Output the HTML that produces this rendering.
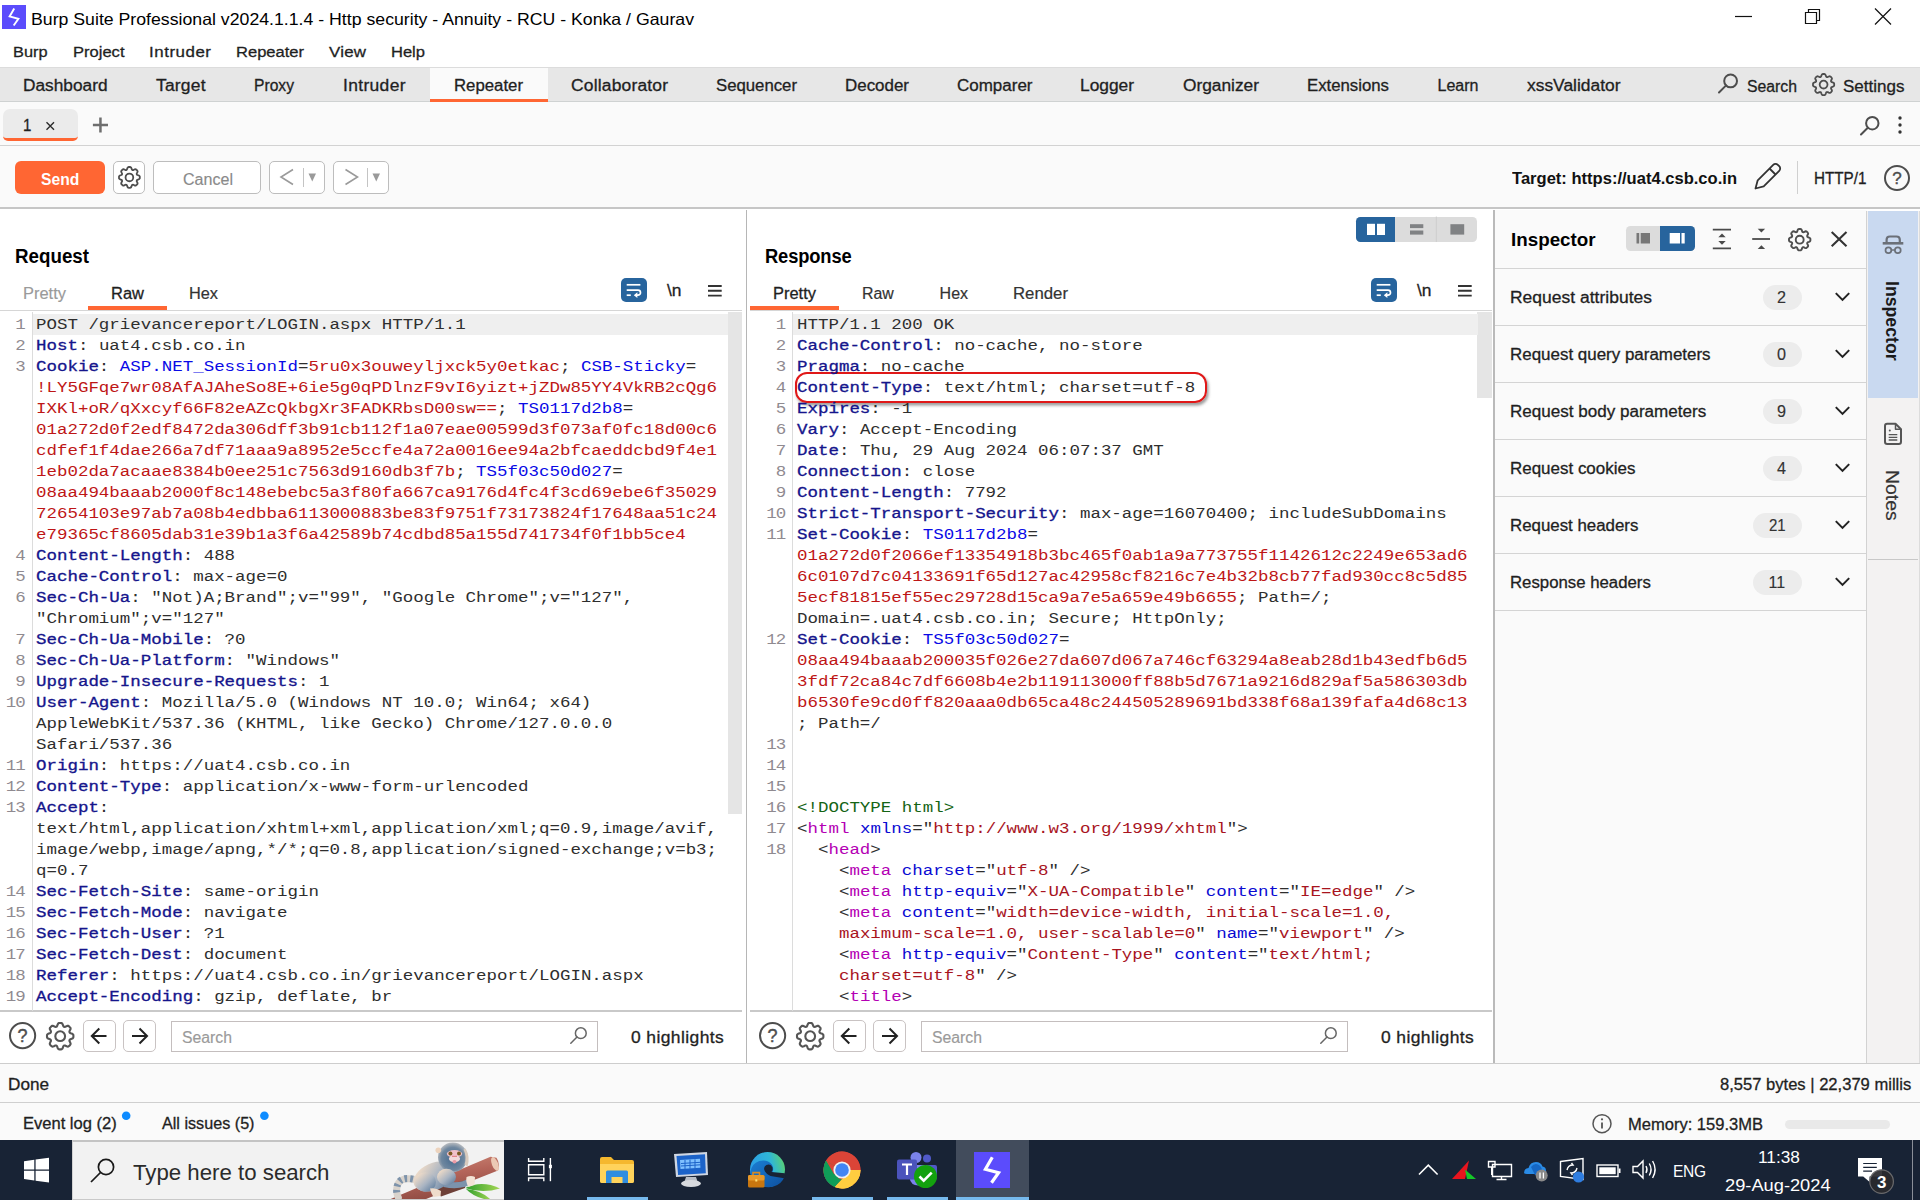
<!DOCTYPE html>
<html lang="en">
<head>
<meta charset="utf-8">
<title>Burp Suite Professional - Repeater</title>
<style>
html,body{margin:0;padding:0;}
body{width:1920px;height:1200px;position:relative;overflow:hidden;background:#fff;font-family:"Liberation Sans",sans-serif;}
.a{position:absolute;box-sizing:border-box;}
.t{position:absolute;white-space:pre;line-height:24px;transform-origin:0 0;font-family:"Liberation Sans",sans-serif;}
svg{position:absolute;overflow:visible;}
.btn{position:absolute;box-sizing:border-box;background:#fff;border:1px solid #bdbdbd;border-radius:5px;}
.code{position:absolute;font-family:"Liberation Mono",monospace;font-size:15.5px;transform:scaleX(1.1265);transform-origin:0 0;line-height:21px;color:#2e2e2e;}
.code div{height:21px;white-space:pre;}
.ln{position:absolute;font-family:"Liberation Mono",monospace;font-size:15.5px;transform:scaleX(1.1265);transform-origin:100% 0;line-height:21px;color:#8f8a90;text-align:right;letter-spacing:-1px;}
.ln div{height:21px;}
.h{color:#15158c;-webkit-text-stroke:0.32px #15158c;}
.cn{color:#0a0ae6;}
.cv{color:#be1616;}
.tg{color:#b400b4;}
.an{color:#0a0ad2;}
.av{color:#a8141e;}
.dt{color:#146414;}
.vt{position:absolute;white-space:pre;font-family:"Liberation Sans",sans-serif;transform-origin:0 0;transform:rotate(90deg);line-height:24px;}

</style>
</head>
<body>
<!-- title bar -->
<div class="a" style="left:2px;top:5px;width:24px;height:24px;background:#5b4cfc;"></div>
<svg style="left:2px;top:5px" width="24" height="24" viewBox="0 0 24 24"><path d="M12.200 3.500L7.600 11.500L16.400 13.900L11.700 20.500" fill="none" stroke="#fff" stroke-width="1.900" stroke-linejoin="miter"/></svg>
<svg style="left:0;top:0" width="1" height="1"><g fill="none" stroke="#111" stroke-width="1.2"><path d="M1735 16.5h17"/><path d="M1805.5 12.5h11v11h-11z"/><path d="M1808.5 12.5v-3h11v11h-3"/><path d="M1875 8.5l16 16M1891 8.5l-16 16"/></g></svg>
<!-- main tab bar -->
<div class="a" style="left:0px;top:67px;width:1920px;height:35px;background:#e7e7e7;border-top:1px solid #dcdcdc;border-bottom:1px solid #cfd2d2;"></div>
<div class="a" style="left:430px;top:68px;width:117.5px;height:34px;background:#fafafa;border-bottom:3px solid #ff6633;"></div>
<svg style="left:0;top:0" width="1" height="1"><g fill="none" stroke="#4d4d4d" stroke-width="2" stroke-linecap="round"><circle cx="1730.6" cy="80.9" r="6.4"/><path d="M1726.1 85.4L1719.0 92.5"/></g></svg>
<svg style="left:0;top:0" width="0" height="0"><defs><path id="gearp" vector-effect="non-scaling-stroke" d="M0.0 -10.0L0.6 -10.0L1.1 -9.9L1.6 -9.5L2.0 -8.7L2.3 -7.8L2.6 -7.3L2.9 -7.1L3.4 -7.0L3.9 -7.1L4.8 -7.6L5.6 -7.9L6.2 -7.8L6.7 -7.4L7.1 -7.1L7.4 -6.7L7.8 -6.2L7.9 -5.6L7.6 -4.8L7.1 -3.9L7.0 -3.4L7.1 -2.9L7.3 -2.6L7.8 -2.3L8.7 -2.0L9.5 -1.6L9.9 -1.1L10.0 -0.6L10.0 0.0L10.0 0.6L9.9 1.1L9.5 1.6L8.7 2.0L7.8 2.3L7.3 2.6L7.1 2.9L7.0 3.4L7.1 3.9L7.6 4.8L7.9 5.6L7.8 6.2L7.4 6.7L7.1 7.1L6.7 7.4L6.2 7.8L5.6 7.9L4.8 7.6L3.9 7.1L3.4 7.0L2.9 7.1L2.6 7.3L2.3 7.8L2.0 8.7L1.6 9.5L1.1 9.9L0.6 10.0L0.0 10.0L-0.6 10.0L-1.1 9.9L-1.6 9.5L-2.0 8.7L-2.3 7.8L-2.6 7.3L-2.9 7.1L-3.4 7.0L-3.9 7.1L-4.8 7.6L-5.6 7.9L-6.2 7.8L-6.7 7.4L-7.1 7.1L-7.4 6.7L-7.8 6.2L-7.9 5.6L-7.6 4.8L-7.1 3.9L-7.0 3.4L-7.1 2.9L-7.3 2.6L-7.8 2.3L-8.7 2.0L-9.5 1.6L-9.9 1.1L-10.0 0.6L-10.0 0.0L-10.0 -0.6L-9.9 -1.1L-9.5 -1.6L-8.7 -2.0L-7.8 -2.3L-7.3 -2.6L-7.1 -2.9L-7.0 -3.4L-7.1 -3.9L-7.6 -4.8L-7.9 -5.6L-7.8 -6.2L-7.4 -6.7L-7.1 -7.1L-6.7 -7.4L-6.2 -7.8L-5.6 -7.9L-4.8 -7.6L-3.9 -7.1L-3.4 -7.0L-2.9 -7.1L-2.6 -7.3L-2.3 -7.8L-2.0 -8.7L-1.6 -9.5L-1.1 -9.9L-0.6 -10.0Z"/></defs></svg>
<svg style="left:1810.9px;top:71.9px" width="25.2" height="25.2" viewBox="-12.6 -12.6 25.2 25.2"><g fill="none" stroke="#4d4d4d" stroke-width="1.8" stroke-linejoin="round"><use href="#gearp" transform="scale(1.060)"/><circle r="3.92"/></g></svg>
<!-- repeater sub tabs -->
<div class="a" style="left:0px;top:102px;width:1920px;height:44px;background:#fafafa;border-bottom:1px solid #d2d2d2;"></div>
<div class="a" style="left:3.3px;top:108.8px;width:74.6px;height:32.7px;background:#ebebeb;border-radius:7px 7px 5px 5px;border-bottom:3.2px solid #ff6633;"></div>
<svg style="left:0;top:0" width="1" height="1"><g fill="none" stroke="#2a2a2a" stroke-width="1.4"><path d="M46.500 122.200l7.500 7.500M54 122.200l-7.500 7.500"/></g><g stroke="#6e6e6e" stroke-width="2.500"><path d="M92.900 125h15.100M100.450 117.500v15"/></g><g fill="#333"><circle cx="1900" cy="118" r="1.7"/><circle cx="1900" cy="125" r="1.7"/><circle cx="1900" cy="132" r="1.7"/></g></svg>
<svg style="left:0;top:0" width="1" height="1"><g fill="none" stroke="#4d4d4d" stroke-width="2" stroke-linecap="round"><circle cx="1872.3" cy="123.2" r="6.2"/><path d="M1867.8 127.7L1861.0 134.5"/></g></svg>
<!-- toolbar -->
<div class="a" style="left:0px;top:146px;width:1920px;height:63px;background:#fafafa;border-bottom:2px solid #c6c6c6;"></div>
<div class="a" style="left:15px;top:161px;width:90px;height:33px;background:#ff6633;border-radius:6px;"></div>
<div class="btn" style="left:113px;top:161px;width:32px;height:33px;"></div>
<svg style="left:116.6px;top:165.1px" width="24.8" height="24.8" viewBox="-12.4 -12.4 24.8 24.8"><g fill="none" stroke="#4d4d4d" stroke-width="1.8" stroke-linejoin="round"><use href="#gearp" transform="scale(1.040)"/><circle r="3.85"/></g></svg>
<div class="btn" style="left:153px;top:161px;width:108px;height:33px;"></div>
<div class="btn" style="left:269px;top:161px;width:56px;height:33px;"></div>
<div class="btn" style="left:333px;top:161px;width:56px;height:33px;"></div>
<svg style="left:0;top:0" width="1" height="1"><g fill="none" stroke="#9a9a9a" stroke-width="1.6"><path d="M293 169.5l-12 7.5l12 7.5"/><path d="M345.5 169.5l12 7.5l-12 7.5"/></g><g stroke="#c4c4c4" stroke-width="1"><path d="M303.5 168v19M367.5 168v19"/></g><g fill="#9a9a9a"><path d="M308.5 173.5h7.5l-3.75 8z"/><path d="M372.5 173.5h7.5l-3.75 8z"/></g></svg>
<svg style="left:0;top:0" width="1" height="1"><g fill="none" stroke="#333" stroke-width="1.8" stroke-linejoin="round"><path d="M1755.5 188.5l2.2-8.2l15.5-15.5a3.2 3.2 0 0 1 4.6 0l1.4 1.4a3.2 3.2 0 0 1 0 4.6l-15.5 15.5z"/><path d="M1769.5 168.5l6 6"/></g><path d="M1797.5 161v33" stroke="#d0d0d0" stroke-width="1"/></svg>
<svg style="left:1881.5px;top:162.5px" width="30" height="30" viewBox="-15 -15 30 30"><circle r="12.0" fill="none" stroke="#4d4d4d" stroke-width="2"/><text x="0" y="6.1" text-anchor="middle" font-family="Liberation Sans, sans-serif" font-size="17" fill="#4d4d4d" stroke="#4d4d4d" stroke-width="0.4">?</text></svg>
<!-- request / response panels -->
<div class="a" style="left:745.5px;top:210px;width:1.5px;height:853px;background:#b6b6b6;"></div>
<div class="a" style="left:1492.5px;top:210px;width:2.2px;height:853px;background:#bababa;"></div>
<div class="a" style="left:0px;top:310px;width:742px;height:1px;background:#d6d6d6;"></div>
<div class="a" style="left:0px;top:1010px;width:742px;height:1.5px;background:#c9c9c9;"></div>
<div class="a" style="left:750px;top:310px;width:742px;height:1px;background:#d6d6d6;"></div>
<div class="a" style="left:750px;top:1010px;width:742px;height:1.5px;background:#c9c9c9;"></div>
<div class="a" style="left:727.5px;top:311.5px;width:14.8px;height:502.2px;background:#e5e5e5;"></div>
<div class="a" style="left:1477.4px;top:311.5px;width:14.8px;height:86.3px;background:#e5e5e5;"></div>
<div class="a" style="left:88px;top:306.2px;width:78.5px;height:3.5px;background:#ff6633;"></div>
<div class="a" style="left:750px;top:306.2px;width:88.5px;height:3.5px;background:#ff6633;"></div>
<div class="a" style="left:621px;top:278.2px;width:25.7px;height:23.8px;background:#27649d;border-radius:5px;"></div>
<svg style="left:621px;top:278.2px" width="26" height="24" viewBox="0 0 26 24"><g fill="none" stroke="#fff" stroke-width="1.7" stroke-linecap="butt"><path d="M5.700 6.800h13.700"/><path d="M5.700 12.200h11.300a2.500 2.500 0 0 1 0 5h-2.600"/><path d="M5.700 17.200h4.100"/></g><path d="M16.400 14.300v5.800l-3.600-2.900z" fill="#fff"/></svg>
<svg style="left:0;top:0" width="1" height="1"><g stroke="#333" stroke-width="1.9"><path d="M708 286h13.700M708 290.800h13.700M708 295.600h13.700"/></g></svg>
<div class="a" style="left:1371px;top:278.2px;width:25.7px;height:23.8px;background:#27649d;border-radius:5px;"></div>
<svg style="left:1371px;top:278.2px" width="26" height="24" viewBox="0 0 26 24"><g fill="none" stroke="#fff" stroke-width="1.7" stroke-linecap="butt"><path d="M5.700 6.800h13.700"/><path d="M5.700 12.200h11.300a2.500 2.500 0 0 1 0 5h-2.600"/><path d="M5.700 17.200h4.100"/></g><path d="M16.400 14.300v5.800l-3.600-2.900z" fill="#fff"/></svg>
<svg style="left:0;top:0" width="1" height="1"><g stroke="#333" stroke-width="1.9"><path d="M1458 286h13.700M1458 290.800h13.700M1458 295.600h13.700"/></g></svg>
<div class="a" style="left:1355.8px;top:216.5px;width:121.7px;height:25.5px;background:#dcdcdc;border-radius:4.5px;"></div>
<div class="a" style="left:1355.8px;top:216.5px;width:39.2px;height:25.5px;background:#27649d;border-radius:4.5px 0 0 4.5px;"></div>
<svg style="left:0;top:0" width="1" height="1"><g fill="#fff"><rect x="1367" y="223.800" width="8" height="11.200"/><rect x="1377" y="223.800" width="8" height="11.200"/></g><g fill="#808284"><rect x="1410" y="224.200" width="13.300" height="3.900"/><rect x="1410" y="230.500" width="13.300" height="4.100"/><rect x="1450.400" y="224.200" width="13.800" height="10.400"/></g><path d="M1436.300 216.500v25.500" stroke="#cdcdcd" stroke-width="1"/></svg>
<div class="a" style="left:794.5px;top:372px;width:412.5px;height:30.5px;border:2px solid #e01818;border-radius:12px;box-shadow:1.5px 2.5px 3px rgba(90,90,90,.6);"></div>
<svg style="left:6.799999999999999px;top:1019.9999999999999px" width="31.2" height="31.2" viewBox="-15.6 -15.6 31.2 31.2"><circle r="12.6" fill="none" stroke="#4d4d4d" stroke-width="2"/><text x="0" y="6.5" text-anchor="middle" font-family="Liberation Sans, sans-serif" font-size="18" fill="#4d4d4d" stroke="#4d4d4d" stroke-width="0.4">?</text></svg>
<svg style="left:44.5px;top:1020.5px" width="30.4" height="30.4" viewBox="-15.2 -15.2 30.4 30.4"><g fill="none" stroke="#555" stroke-width="2.1" stroke-linejoin="round"><use href="#gearp" transform="scale(1.320)"/><circle r="4.88"/></g></svg>
<div class="btn" style="left:82.5px;top:1019.5px;width:33px;height:32.5px;border-color:#c9c3c3;"></div>
<div class="btn" style="left:123px;top:1019.5px;width:33px;height:32.5px;border-color:#c9c3c3;"></div>
<svg style="left:0;top:0" width="1" height="1"><g fill="none" stroke="#222" stroke-width="2"><path d="M106.5 1036h-14.5M99.3 1028.5l-7.5 7.5l7.5 7.5"/><path d="M132 1036h14.5M139.5 1028.5l7.5 7.5l-7.5 7.5"/></g></svg>
<div class="a" style="left:171px;top:1021px;width:427px;height:31px;background:#fff;border:1.5px solid #c4bebe;"></div>
<svg style="left:0;top:0" width="1" height="1"><g fill="none" stroke="#666" stroke-width="1.5" stroke-linecap="round"><circle cx="580.8" cy="1033.2" r="5.4"/><path d="M577.0 1037.0L570.8 1043.2"/></g></svg>
<svg style="left:756.8px;top:1019.9999999999999px" width="31.2" height="31.2" viewBox="-15.6 -15.6 31.2 31.2"><circle r="12.6" fill="none" stroke="#4d4d4d" stroke-width="2"/><text x="0" y="6.5" text-anchor="middle" font-family="Liberation Sans, sans-serif" font-size="18" fill="#4d4d4d" stroke="#4d4d4d" stroke-width="0.4">?</text></svg>
<svg style="left:794.5px;top:1020.5px" width="30.4" height="30.4" viewBox="-15.2 -15.2 30.4 30.4"><g fill="none" stroke="#555" stroke-width="2.1" stroke-linejoin="round"><use href="#gearp" transform="scale(1.320)"/><circle r="4.88"/></g></svg>
<div class="btn" style="left:832.5px;top:1019.5px;width:33px;height:32.5px;border-color:#c9c3c3;"></div>
<div class="btn" style="left:873px;top:1019.5px;width:33px;height:32.5px;border-color:#c9c3c3;"></div>
<svg style="left:0;top:0" width="1" height="1"><g fill="none" stroke="#222" stroke-width="2"><path d="M856.5 1036h-14.5M849.3 1028.5l-7.5 7.5l7.5 7.5"/><path d="M882 1036h14.5M889.5 1028.5l7.5 7.5l-7.5 7.5"/></g></svg>
<div class="a" style="left:921px;top:1021px;width:427px;height:31px;background:#fff;border:1.5px solid #c4bebe;"></div>
<svg style="left:0;top:0" width="1" height="1"><g fill="none" stroke="#666" stroke-width="1.5" stroke-linecap="round"><circle cx="1330.8" cy="1033.2" r="5.4"/><path d="M1327.0 1037.0L1320.8 1043.2"/></g></svg>
<!-- inspector -->
<div class="a" style="left:1494.7px;top:210px;width:372.3px;height:853px;background:#fafafa;"></div>
<div class="a" style="left:1494.7px;top:267.5px;width:372.3px;height:1.5px;background:#d4d4d4;"></div>
<div class="a" style="left:1494.7px;top:324.5px;width:372.3px;height:1.5px;background:#d4d4d4;"></div>
<div class="a" style="left:1494.7px;top:381.5px;width:372.3px;height:1.5px;background:#d4d4d4;"></div>
<div class="a" style="left:1494.7px;top:438.5px;width:372.3px;height:1.5px;background:#d4d4d4;"></div>
<div class="a" style="left:1494.7px;top:495.5px;width:372.3px;height:1.5px;background:#d4d4d4;"></div>
<div class="a" style="left:1494.7px;top:552.5px;width:372.3px;height:1.5px;background:#d4d4d4;"></div>
<div class="a" style="left:1494.7px;top:609.5px;width:372.3px;height:1.5px;background:#d4d4d4;"></div>
<div class="a" style="left:1626px;top:225.9px;width:69px;height:25.1px;background:#dcdcdc;border-radius:4.5px;"></div>
<div class="a" style="left:1660.3px;top:225.9px;width:34.7px;height:25.1px;background:#27649d;border-radius:0 4.5px 4.5px 0;"></div>
<svg style="left:0;top:0" width="1" height="1"><g fill="#777"><rect x="1636.5" y="233" width="2.7" height="10.5"/><rect x="1640.7" y="233" width="9.3" height="10.5"/></g><g fill="#fff"><rect x="1669.7" y="233" width="10.3" height="10.5"/><rect x="1681.5" y="233" width="3.2" height="10.5"/></g><g stroke="#4a4a4a" stroke-width="1.8" fill="none"><path d="M1712.8 229.700h18.200M1712.800 248.400h18.200"/><path d="M1752.200 239h17.800"/><path d="M1831.700 232l14.800 14.300M1846.500 232l-14.800 14.300" stroke-width="2.100" stroke="#333"/></g><g fill="#4a4a4a"><path d="M1718.300 237.200h7.400l-3.700-3.700z"/><path d="M1718.300 241h7.400l-3.700 3.700z"/><path d="M1757.700 228.800h7.400l-3.700 3.700z"/><path d="M1757.700 249h7.400l-3.700-3.700z"/></g></svg>
<svg style="left:1787.0px;top:226.5px" width="25.4" height="25.4" viewBox="-12.7 -12.7 25.4 25.4"><g fill="none" stroke="#4d4d4d" stroke-width="1.9" stroke-linejoin="round"><use href="#gearp" transform="scale(1.070)"/><circle r="3.96"/></g></svg>
<svg style="left:0;top:0" width="1" height="1"><path d="M1835.8 293.1l6.7 6.8l6.7-6.8" fill="none" stroke="#222" stroke-width="2"/></svg>
<svg style="left:0;top:0" width="1" height="1"><path d="M1835.8 350.1l6.7 6.8l6.7-6.8" fill="none" stroke="#222" stroke-width="2"/></svg>
<svg style="left:0;top:0" width="1" height="1"><path d="M1835.8 407.1l6.7 6.8l6.7-6.8" fill="none" stroke="#222" stroke-width="2"/></svg>
<svg style="left:0;top:0" width="1" height="1"><path d="M1835.8 464.1l6.7 6.8l6.7-6.8" fill="none" stroke="#222" stroke-width="2"/></svg>
<svg style="left:0;top:0" width="1" height="1"><path d="M1835.8 521.1l6.7 6.8l6.7-6.8" fill="none" stroke="#222" stroke-width="2"/></svg>
<svg style="left:0;top:0" width="1" height="1"><path d="M1835.8 578.1l6.7 6.8l6.7-6.8" fill="none" stroke="#222" stroke-width="2"/></svg>
<div class="a" style="left:1762.5px;top:285px;width:39.0px;height:25px;background:#ececec;border-radius:12.5px;"></div>
<div class="a" style="left:1762.5px;top:342px;width:39.0px;height:25px;background:#ececec;border-radius:12.5px;"></div>
<div class="a" style="left:1762.5px;top:399px;width:39.0px;height:25px;background:#ececec;border-radius:12.5px;"></div>
<div class="a" style="left:1762.5px;top:456px;width:39.0px;height:25px;background:#ececec;border-radius:12.5px;"></div>
<div class="a" style="left:1753px;top:513px;width:48.5px;height:25px;background:#ececec;border-radius:12.5px;"></div>
<div class="a" style="left:1753px;top:570px;width:48.5px;height:25px;background:#ececec;border-radius:12.5px;"></div>
<div class="a" style="left:1866px;top:210.6px;width:54px;height:852.4px;background:#f3f2f2;border-left:1.7px solid #d2d2d2;border-right:1.5px solid #dcdcdc;"></div>
<div class="a" style="left:1867.7px;top:210.6px;width:50.8px;height:187.4px;background:#c9d9f0;"></div>
<div class="a" style="left:1867.7px;top:558.6px;width:50.8px;height:1.5px;background:#c8c8c8;"></div>
<svg style="left:0;top:0" width="1" height="1"><g fill="none" stroke="#6b7078"><path d="M1882.700 243.300h20.600" stroke-width="2.600"/><path d="M1886.600 243v-3.200q0-3.300 3.300-3.300h6.600q3.300 0 3.300 3.300v3.200" stroke-width="2.200"/><circle cx="1888.400" cy="250.300" r="2.900" stroke-width="1.700"/><circle cx="1897.800" cy="250.300" r="2.900" stroke-width="1.700"/><path d="M1891.300 250h3.600" stroke-width="1.500"/></g><g fill="none" stroke="#555" stroke-width="2" stroke-linejoin="round"><path d="M1885 426q0-2.200 2.200-2.200h8.300l5.500 5.500v12.500q0 2.200-2.200 2.200h-11.600q-2.200 0-2.200-2.200z"/><path d="M1895.500 424v5.300h5.300" stroke-width="1.500"/><path d="M1888.700 434.700h8.600M1888.700 437.400h8.600M1888.700 440h8.600" stroke-width="1.300"/></g><circle cx="1889.800" cy="430.600" r="1" fill="#555"/></svg>
<span class="vt" style="left:1903.800px;top:280.700px;font-size:18.800px;font-weight:700;color:#1a1a1a;transform:rotate(90deg) scaleX(0.942);">Inspector</span>
<span class="vt" style="left:1903.800px;top:469.800px;font-size:19px;color:#333;transform:rotate(90deg) scaleX(1.020);-webkit-text-stroke:0.2px #333;">Notes</span>
<!-- status -->
<div class="a" style="left:0px;top:1063px;width:1920px;height:40px;background:#fafafa;border-top:1.5px solid #cdcdcd;border-bottom:1.5px solid #cfcfcf;"></div>
<div class="a" style="left:0px;top:1103px;width:1920px;height:37px;background:#fafafa;"></div>
<svg style="left:0;top:0" width="1" height="1"><circle cx="126.2" cy="1115.8" r="4.3" fill="#0d8bff"/><circle cx="264.4" cy="1115.8" r="4.3" fill="#0d8bff"/><circle cx="1602" cy="1123.7" r="9" fill="none" stroke="#555" stroke-width="1.5"/><path d="M1602 1122.500v6" stroke="#555" stroke-width="1.8"/><circle cx="1602" cy="1119.3" r="1.1" fill="#555"/></svg>
<div class="a" style="left:1785px;top:1119.5px;width:105px;height:9.5px;background:#e9e9e9;border-radius:5px;"></div><div class="a vp" style="left:0;top:312px;width:727.5px;height:698.5px;overflow:hidden;">
<div class="a" style="left:33px;top:1.7px;width:694.5px;height:21px;background:#efefef;"></div>
<div class="a" style="left:32px;top:0;width:1px;height:699px;background:#dcdcdc;"></div>
<div class="ln" style="left:0;width:24.5px;top:2.5px;">
<div>1</div>
<div>2</div>
<div>3</div>
<div>&nbsp;</div>
<div>&nbsp;</div>
<div>&nbsp;</div>
<div>&nbsp;</div>
<div>&nbsp;</div>
<div>&nbsp;</div>
<div>&nbsp;</div>
<div>&nbsp;</div>
<div>4</div>
<div>5</div>
<div>6</div>
<div>&nbsp;</div>
<div>7</div>
<div>8</div>
<div>9</div>
<div>10</div>
<div>&nbsp;</div>
<div>&nbsp;</div>
<div>11</div>
<div>12</div>
<div>13</div>
<div>&nbsp;</div>
<div>&nbsp;</div>
<div>&nbsp;</div>
<div>14</div>
<div>15</div>
<div>16</div>
<div>17</div>
<div>18</div>
<div>19</div>
</div>
<div class="code" style="left:36.4px;top:2.5px;">
<div>POST /grievancereport/LOGIN.aspx HTTP/1.1</div>
<div><span class="h">Host</span>: uat4.csb.co.in</div>
<div><span class="h">Cookie</span>: <span class="cn">ASP.NET_SessionId</span>=<span class="cv">5ru0x3ouweyljxck5y0etkac</span>; <span class="cn">CSB-Sticky</span>=</div>
<div><span class="cv">!LY5GFqe7wr08AfAJAheSo8E+6ie5g0qPDlnzF9vI6yizt+jZDw85YY4VkRB2cQg6</span></div>
<div><span class="cv">IXKl+oR/qXxcyf66F82eAZcQkbgXr3FADKRbsD00sw==</span>; <span class="cn">TS0117d2b8</span>=</div>
<div><span class="cv">01a272d0f2edf8472da306dff3b91cb112f1a07eae00599d3f073af0fc18d00c6</span></div>
<div><span class="cv">cdfef1f4dae266a7df71aaa9a8952e5ccfe4a72a0016ee94a2bfcaeddcbd9f4e1</span></div>
<div><span class="cv">1eb02da7acaae8384b0ee251c7563d9160db3f7b</span>; <span class="cn">TS5f03c50d027</span>=</div>
<div><span class="cv">08aa494baaab2000f8c148ebebc5a3f80fa667ca9176d4fc4f3cd69ebe6f35029</span></div>
<div><span class="cv">72654103e97ab7a08b4edbba6113000883be83f9751f73173824f17648aa51c24</span></div>
<div><span class="cv">e79365cf8605dab31e39b1a3f6a42589b74cdbd85a155d741734f0f1bb5ce4</span></div>
<div><span class="h">Content-Length</span>: 488</div>
<div><span class="h">Cache-Control</span>: max-age=0</div>
<div><span class="h">Sec-Ch-Ua</span>: "Not)A;Brand";v="99", "Google Chrome";v="127",</div>
<div>"Chromium";v="127"</div>
<div><span class="h">Sec-Ch-Ua-Mobile</span>: ?0</div>
<div><span class="h">Sec-Ch-Ua-Platform</span>: "Windows"</div>
<div><span class="h">Upgrade-Insecure-Requests</span>: 1</div>
<div><span class="h">User-Agent</span>: Mozilla/5.0 (Windows NT 10.0; Win64; x64)</div>
<div>AppleWebKit/537.36 (KHTML, like Gecko) Chrome/127.0.0.0</div>
<div>Safari/537.36</div>
<div><span class="h">Origin</span>: https://uat4.csb.co.in</div>
<div><span class="h">Content-Type</span>: application/x-www-form-urlencoded</div>
<div><span class="h">Accept</span>:</div>
<div>text/html,application/xhtml+xml,application/xml;q=0.9,image/avif,</div>
<div>image/webp,image/apng,*/*;q=0.8,application/signed-exchange;v=b3;</div>
<div>q=0.7</div>
<div><span class="h">Sec-Fetch-Site</span>: same-origin</div>
<div><span class="h">Sec-Fetch-Mode</span>: navigate</div>
<div><span class="h">Sec-Fetch-User</span>: ?1</div>
<div><span class="h">Sec-Fetch-Dest</span>: document</div>
<div><span class="h">Referer</span>: https://uat4.csb.co.in/grievancereport/LOGIN.aspx</div>
<div><span class="h">Accept-Encoding</span>: gzip, deflate, br</div>
</div>

</div>
<div class="a vp" style="left:750px;top:312px;width:727.5px;height:698.5px;overflow:hidden;">
<div class="a" style="left:43px;top:1.7px;width:684.5px;height:21px;background:#efefef;"></div>
<div class="a" style="left:42px;top:0;width:1px;height:699px;background:#dcdcdc;"></div>
<div class="ln" style="left:0;width:35px;top:2.5px;">
<div>1</div>
<div>2</div>
<div>3</div>
<div>4</div>
<div>5</div>
<div>6</div>
<div>7</div>
<div>8</div>
<div>9</div>
<div>10</div>
<div>11</div>
<div>&nbsp;</div>
<div>&nbsp;</div>
<div>&nbsp;</div>
<div>&nbsp;</div>
<div>12</div>
<div>&nbsp;</div>
<div>&nbsp;</div>
<div>&nbsp;</div>
<div>&nbsp;</div>
<div>13</div>
<div>14</div>
<div>15</div>
<div>16</div>
<div>17</div>
<div>18</div>
<div>&nbsp;</div>
<div>&nbsp;</div>
<div>&nbsp;</div>
<div>&nbsp;</div>
<div>&nbsp;</div>
<div>&nbsp;</div>
<div>&nbsp;</div>
</div>
<div class="code" style="left:46.6px;top:2.5px;">
<div>HTTP/1.1 200 OK</div>
<div><span class="h">Cache-Control</span>: no-cache, no-store</div>
<div><span class="h">Pragma</span>: no-cache</div>
<div><span class="h">Content-Type</span>: text/html; charset=utf-8</div>
<div><span class="h">Expires</span>: -1</div>
<div><span class="h">Vary</span>: Accept-Encoding</div>
<div><span class="h">Date</span>: Thu, 29 Aug 2024 06:07:37 GMT</div>
<div><span class="h">Connection</span>: close</div>
<div><span class="h">Content-Length</span>: 7792</div>
<div><span class="h">Strict-Transport-Security</span>: max-age=16070400; includeSubDomains</div>
<div><span class="h">Set-Cookie</span>: <span class="cn">TS0117d2b8</span>=</div>
<div><span class="cv">01a272d0f2066ef13354918b3bc465f0ab1a9a773755f1142612c2249e653ad6</span></div>
<div><span class="cv">6c0107d7c04133691f65d127ac42958cf8216c7e4b32b8cb77fad930cc8c5d85</span></div>
<div><span class="cv">5ecf81815ef55ec29728d15ca9a7e5a659e49b6655</span>; Path=/;</div>
<div>Domain=.uat4.csb.co.in; Secure; HttpOnly;</div>
<div><span class="h">Set-Cookie</span>: <span class="cn">TS5f03c50d027</span>=</div>
<div><span class="cv">08aa494baaab200035f026e27da607d067a746cf63294a8eab28d1b43edfb6d5</span></div>
<div><span class="cv">3fdf72ca84c7df6608b4e2b119113000ff88b5d7671a9216d829af5a586303db</span></div>
<div><span class="cv">b6530fe9cd0ff820aaa0db65ca48c244505289691bd338f68a139fafa4d68c13</span></div>
<div>; Path=/</div>
<div>&nbsp;</div>
<div>&nbsp;</div>
<div>&nbsp;</div>
<div><span class="dt">&lt;!DOCTYPE html&gt;</span></div>
<div>&lt;<span class="tg">html</span> <span class="an">xmlns</span>="<span class="av">http://www.w3.org/1999/xhtml</span>"&gt;</div>
<div>  &lt;<span class="tg">head</span>&gt;</div>
<div>    &lt;<span class="tg">meta</span> <span class="an">charset</span>="<span class="av">utf-8</span>" /&gt;</div>
<div>    &lt;<span class="tg">meta</span> <span class="an">http-equiv</span>="<span class="av">X-UA-Compatible</span>" <span class="an">content</span>="<span class="av">IE=edge</span>" /&gt;</div>
<div>    &lt;<span class="tg">meta</span> <span class="an">content</span>="<span class="av">width=device-width, initial-scale=1.0,</span></div>
<div>    <span class="av">maximum-scale=1.0, user-scalable=0</span>" <span class="an">name</span>="<span class="av">viewport</span>" /&gt;</div>
<div>    &lt;<span class="tg">meta</span> <span class="an">http-equiv</span>="<span class="av">Content-Type</span>" <span class="an">content</span>="<span class="av">text/html;</span></div>
<div>    <span class="av">charset=utf-8</span>" /&gt;</div>
<div>    &lt;<span class="tg">title</span>&gt;</div>
</div>

</div>
<!-- windows taskbar -->
<div class="a" style="left:0;top:1140px;width:1920px;height:60px;background:#182335;"></div>
<svg style="left:0;top:0" width="1" height="1"><g fill="#fff"><path d="M24 1161.2l10.300-1.400v9.700h-10.300z"/><path d="M35.600 1159.600l13.400-1.900v11.800h-13.400z"/><path d="M24 1170.800h10.300v9.700l-10.300-1.400z"/><path d="M35.600 1170.800h13.400v11.800l-13.400-1.900z"/></g></svg>
<div class="a" style="left:72px;top:1140px;width:432px;height:60px;background:#f2f2f2;border-top:2px solid #c4c4c4;border-bottom:1.5px solid #c9c9c9;border-left:1.5px solid #d2d2d2;"></div>
<svg style="left:0;top:0" width="1" height="1"><g fill="none" stroke="#1a1a1a" stroke-width="1.7"><circle cx="106" cy="1167" r="7.6"/><path d="M100.5 1172.500l-9.500 9.500"/></g></svg>
<svg style="left:380px;top:1141.5px;overflow:hidden" width="123" height="57.500" viewBox="380 1141.500 123 57.500"><defs><linearGradient id="mk1" x1="0" y1="0" x2="1" y2="1"><stop offset="0.1" stop-color="#f5dfc9"/><stop offset="0.55" stop-color="#a9b4c2"/><stop offset="1" stop-color="#4f7196"/></linearGradient><radialGradient id="mk2" cx="0.5" cy="0.55" r="0.55"><stop offset="0" stop-color="#466a8e"/><stop offset="0.7" stop-color="#6f879f"/><stop offset="1" stop-color="#b9bcc0"/></radialGradient><linearGradient id="mk3" x1="0" y1="0" x2="0.35" y2="1"><stop offset="0" stop-color="#d08e7c"/><stop offset="0.5" stop-color="#b5655a"/><stop offset="1" stop-color="#8e4a42"/></linearGradient><linearGradient id="mk4" x1="0" y1="0" x2="1" y2="0"><stop offset="0" stop-color="#2f9e2c"/><stop offset="1" stop-color="#a4d654"/></linearGradient></defs><path d="M465.300 1187.400Q482 1179.500 500 1188Q482 1193.500 465.300 1187.400z" fill="url(#mk4)"/><path d="M466 1188.500Q481 1189.500 491.500 1199.800Q475 1198 466 1188.500z" fill="url(#mk4)"/><path d="M386 1200.500L421 1200.500L498 1170Q500.500 1163 496.500 1157.300L490.500 1156.200z" fill="url(#mk3)"/><ellipse cx="495" cy="1163.500" rx="3.100" ry="7.300" transform="rotate(-22 495 1163.500)" fill="#ecc9b4"/><path d="M431 1186.500L466 1180L465 1187.500L441 1196z" fill="#6e4038"/><path d="M415 1179Q398.500 1175.500 396.800 1187.500Q396.300 1193.500 398.300 1197" fill="none" stroke="#d9d3cc" stroke-width="7" stroke-linecap="round"/><path d="M413 1178.600Q398.500 1175.500 396.800 1187.500Q396.300 1192 397.300 1194" fill="none" stroke="#7d93ab" stroke-width="7" stroke-dasharray="2.600 3.200"/><ellipse cx="434" cy="1176" rx="21.500" ry="13.500" transform="rotate(-24 434 1176)" fill="url(#mk1)"/><ellipse cx="425.500" cy="1181.500" rx="10.500" ry="9.800" fill="url(#mk1)"/><path d="M430 1188Q436 1187 441 1190.500L440.500 1195.500L433.500 1196.500Q431 1193 430 1188z" fill="#efdccb"/><circle cx="452.800" cy="1156.800" r="14.800" fill="url(#mk2)"/><circle cx="438.300" cy="1149.800" r="2.800" fill="#ecd3bd"/><path d="M465.500 1148Q470.500 1156 467.500 1166L464.500 1164Q467 1156 463.500 1149z" fill="#d8cabd"/><path d="M444 1180Q458 1184.500 470 1177.500L474.500 1181.500Q462 1190.500 443.500 1186.500z" fill="#7c93ac"/><ellipse cx="446.500" cy="1176.500" rx="9.500" ry="8.300" fill="url(#mk1)"/><path d="M466.500 1176.500Q471 1174.500 475 1176.500L474.500 1184.500L468.500 1186.500Q465.500 1182 466.500 1176.500z" fill="#f3e3d6"/><ellipse cx="454.500" cy="1153.300" rx="7.700" ry="3.700" fill="#f1c0c9"/><circle cx="450.400" cy="1153" r="2" fill="#7a5a22"/><circle cx="459" cy="1153" r="2" fill="#7a5a22"/><ellipse cx="454.500" cy="1158.300" rx="5.600" ry="3.400" fill="#f3d9da"/><ellipse cx="454.500" cy="1161.200" rx="2.100" ry="1.700" fill="#ec9aa5"/><path d="M452 1155.800h5" stroke="#e0707a" stroke-width="1"/></svg>
<svg style="left:0;top:0" width="1" height="1"><g fill="none" stroke="#fff" stroke-width="1.400"><path d="M528.600 1158v3.200h15.200v-3.200"/><path d="M528.600 1164.700h15.200v10h-15.200z"/><path d="M528.600 1181.200v-3.200h15.200v3.200"/><path d="M550.400 1158v23.200"/></g><rect x="548.900" y="1164.800" width="3" height="3.400" fill="#fff"/></svg>
<svg style="left:600px;top:1156px" width="34" height="28" viewBox="0 0 34 28"><path d="M0 3q0-2 2-2h9l3 3h18q2 0 2 2v19q0 2-2 2h-30q-2 0-2-2z" fill="#f5b82e"/><path d="M0 8h34v17q0 2-2 2h-30q-2 0-2-2z" fill="#ffd35b"/><path d="M6 16q0-1.500 1.500-1.500h19q1.500 0 1.500 1.500v11h-22z" fill="#2f8de0"/><rect x="11.500" y="21" width="11" height="6" fill="#ffd35b"/></svg>
<svg style="left:672px;top:1150px" width="40" height="38" viewBox="0 0 40 38"><path d="M14 27h10l2 6h-14z" fill="#b9bec6"/><ellipse cx="19" cy="33.500" rx="10" ry="3.500" fill="#d7dade"/><path d="M2 4l33-2l1 23l-32 2z" fill="#cfd6e2"/><path d="M4.500 6l28.500-1.700l.800 19l-27.700 1.600z" fill="#1c63c9"/><path d="M8 10l20-1.200l.400 9l-19.900 1.200z" fill="#7fc0ff"/><g stroke="#1c63c9" stroke-width="1"><path d="M9 13.500l19.500-1.200M9 16l19.500-1.200M13 10v9M18 9.700v9M23 9.400v9"/></g></svg>
<svg style="left:748px;top:1151px" width="40" height="38" viewBox="0 0 40 38"><defs><linearGradient id="eg1" x1="0" y1="0.3" x2="1" y2="0"><stop offset="0" stop-color="#2b9fe6"/><stop offset="0.55" stop-color="#2fb6d8"/><stop offset="1" stop-color="#63d75a"/></linearGradient><linearGradient id="eg2" x1="0" y1="0" x2="1" y2="1"><stop offset="0" stop-color="#1b7ed3"/><stop offset="1" stop-color="#0d4f9e"/></linearGradient></defs><circle cx="19.500" cy="18.500" r="17.500" fill="url(#eg1)"/><path d="M2.300 21.500q1-9 9-11.500q8-2 12.500 3.500q2.500 4 .500 8l12.500 3.500q-3 8.500-12 10.800q-9 1.700-16-3.800q-5.500-4-6.500-10.500z" fill="url(#eg2)"/><path d="M17 20.500q-2.500-4 1.500-6.500q4.500-1.500 6 2.500q.700 2.500-1 4.500l13.300 1.200q.800 2.300-.500 5l-13.800-2.200q-3.500-1-5.500-4.500z" fill="#182335"/><rect x="0" y="24" width="16.500" height="12.500" rx="1.500" fill="#c8760f"/><rect x="0" y="24" width="16.500" height="5.500" rx="1.500" fill="#e8992a"/><path d="M5 24v-2.400h6.500v2.400" fill="none" stroke="#d98a20" stroke-width="1.600"/><rect x="7.300" y="28.300" width="2" height="2.200" fill="#ffe27a"/></svg>
<svg style="left:823px;top:1151px" width="38" height="38" viewBox="-19 -19 38 38"><circle r="18.500" fill="#db4437"/><path d="M-16.020 9.250A18.500 18.500 0 0 1 -16.020 -9.250L0 0z" fill="#db4437"/><path d="M0 0L-16.020 -9.250A18.500 18.500 0 0 0 -7.200 17.040z" fill="#0f9d58"/><path d="M-16.020 -9.250L-8 4.600L0 0z" fill="#db4437"/><path d="M-7.200 17.040A18.500 18.500 0 0 0 18.500 0L8 0L0 9.200z" fill="#ffcd40"/><path d="M-16.020 -9.250A18.500 18.500 0 0 1 18.500 0H0z" fill="#db4437"/><path d="M-16.020 -9.250L-8 4.620A9.240 9.240 0 0 0 0 9.240L-7.200 17.040A18.500 18.500 0 0 1 -16.020 -9.250z" fill="#0f9d58"/><path d="M18.500 0A18.500 18.500 0 0 1 -7.200 17.040L0 9.240A9.240 9.240 0 0 0 8 4.620L9.240 0z" fill="#ffcd40"/><circle r="8.600" fill="#f1f1f1"/><circle r="6.800" fill="#4285f4"/></svg>
<svg style="left:897px;top:1151px" width="42" height="38" viewBox="0 0 42 38"><circle cx="30" cy="7.500" r="4" fill="#5059c9"/><circle cx="19" cy="6.500" r="5.500" fill="#7b83eb"/><path d="M12 14h26q2 0 2 2v9q0 6-6 6q-5 0-6-5z" fill="#5059c9"/><path d="M9 14h20q1.500 0 1.500 1.500v11q0 8-9 8q-8 0-9-8z" fill="#7b83eb"/><rect x="0" y="8.500" width="20" height="20" rx="2" fill="#4b53bc"/><path d="M5 13.500h10M10 13.500v10.500" stroke="#fff" stroke-width="2.200"/><circle cx="28.500" cy="25.500" r="11.500" fill="#13a10e"/><path d="M22.500 25.500l4.200 4.200l8-8" fill="none" stroke="#fff" stroke-width="2.600"/></svg>
<div class="a" style="left:956px;top:1140px;width:73px;height:60px;background:#424c5c;"></div>
<div class="a" style="left:974px;top:1152px;width:36px;height:35.500px;background:#5b4cfc;"></div>
<svg style="left:974px;top:1152px" width="36" height="36" viewBox="0 0 36 36"><path d="M18.300 5.200L11.400 17.200L24.600 20.800L17.500 30.800" fill="none" stroke="#fff" stroke-width="3.200" stroke-linejoin="miter"/></svg>
<div class="a" style="left:587px;top:1197px;width:60.5px;height:3px;background:#76b9ed;"></div>
<div class="a" style="left:812px;top:1197px;width:60.5px;height:3px;background:#76b9ed;"></div>
<div class="a" style="left:887px;top:1197px;width:60.5px;height:3px;background:#76b9ed;"></div>
<div class="a" style="left:956px;top:1197px;width:73px;height:3px;background:#76b9ed;"></div>
<svg style="left:0;top:0" width="1" height="1"><path d="M1419 1174.500l9.300-9.300l9.300 9.300" fill="none" stroke="#fff" stroke-width="1.600"/><path d="M1452 1179l17-18.500l-4 18.500z" fill="#e8141e"/><path d="M1465 1169.500l11 9.500h-9z" fill="#15c728"/><g fill="none" stroke="#fff" stroke-width="1.400"><path d="M1492.500 1164.500h19v12h-19z"/><path d="M1496.500 1179.500h10M1501.500 1176.500v3"/><path d="M1488.500 1161.500h6.500v5.500h-6.500zM1491.700 1167v8"/></g><path d="M1524 1173q0-4.500 4.500-5q1.500-6 7.500-6q5 0 6.500 4.500q3.500.500 3.500 4q0 3.500-4 3.500h-13q-5 0-5-1z" fill="#2a8be6"/><path d="M1531 1167q3-4 7-2.500q3.500 1.500 4 5.500q3 0 3.500 3q-1 2-3.500 2h-7z" fill="#1567c4"/><circle cx="1541.700" cy="1175.500" r="6" fill="#8a8a8a"/><path d="M1540 1172.500v6M1543.400 1172.500v6" stroke="#fff" stroke-width="1.300"/><g fill="none" stroke="#fff" stroke-width="1.400"><path d="M1560.500 1161.500l22.500-3v21l-22.500-3z"/><path d="M1567 1170q1-5 6-5l-1.500-2M1577 1168q-1 5-6 5l1.500 2"/></g><circle cx="1578.500" cy="1177" r="5.600" fill="#2f7de0"/><g><rect x="1597" y="1165" width="21" height="11.500" fill="none" stroke="#fff" stroke-width="1.400"/><rect x="1599.300" y="1167.300" width="16.400" height="6.900" fill="#fff"/><rect x="1618.700" y="1168.500" width="1.800" height="4.500" fill="#fff"/></g><g fill="none" stroke="#fff" stroke-width="1.400"><path d="M1633 1166.500h4.500l5.500-5.500v17l-5.500-5.500h-4.500z"/><path d="M1646 1166q2 3.500 0 7M1649.300 1163.500q3.500 6 0 12M1652.600 1161q5 8.500 0 17"/></g><path d="M1858 1158h24v18.600h-12.500l.200 5.400l-6.500-5.400h-5.200z" fill="#fff"/><g stroke="#182335" stroke-width="1.200"><path d="M1863.200 1163.500h13.600M1863.200 1167.400h13.600M1863.200 1171.200h8.800"/></g><circle cx="1881.600" cy="1181.600" r="11.800" fill="#2a2a2e" fill-opacity=".93" stroke="#6a6a6c" stroke-width="1.200"/><path d="M1912.500 1140v60" stroke="#8a8f99" stroke-width="1"/></svg><span class="t" style="left:31px;top:7.0px;font-size:16.5px;color:#000;transform:scaleX(1.0726);">Burp Suite Professional v2024.1.1.4 - Http security - Annuity - RCU - Konka / Gaurav</span>
<span class="t" style="left:12.5px;top:40.0px;font-size:15.5px;color:#1f1f1f;transform:scaleX(1.0534);-webkit-text-stroke:0.3px #1f1f1f;">Burp</span>
<span class="t" style="left:72.5px;top:40.0px;font-size:15.5px;color:#1f1f1f;transform:scaleX(1.0674);-webkit-text-stroke:0.3px #1f1f1f;">Project</span>
<span class="t" style="left:149px;top:40.0px;font-size:15.5px;color:#1f1f1f;letter-spacing:0.494px;transform:scaleX(1.0900);-webkit-text-stroke:0.3px #1f1f1f;">Intruder</span>
<span class="t" style="left:236px;top:40.0px;font-size:15.5px;color:#1f1f1f;transform:scaleX(1.0664);-webkit-text-stroke:0.3px #1f1f1f;">Repeater</span>
<span class="t" style="left:329px;top:40.0px;font-size:15.5px;color:#1f1f1f;letter-spacing:0.206px;transform:scaleX(1.0900);-webkit-text-stroke:0.3px #1f1f1f;">View</span>
<span class="t" style="left:391px;top:40.0px;font-size:15.5px;color:#1f1f1f;transform:scaleX(1.0661);-webkit-text-stroke:0.3px #1f1f1f;">Help</span>
<span class="t" style="left:23px;top:73.5px;font-size:16px;color:#1f1f1f;transform:scaleX(1.0794);-webkit-text-stroke:0.3px #1f1f1f;">Dashboard</span>
<span class="t" style="left:156px;top:73.5px;font-size:16px;color:#1f1f1f;letter-spacing:0.189px;transform:scaleX(1.0900);-webkit-text-stroke:0.3px #1f1f1f;">Target</span>
<span class="t" style="left:254px;top:73.5px;font-size:16px;color:#1f1f1f;transform:scaleX(0.9778);-webkit-text-stroke:0.3px #1f1f1f;">Proxy</span>
<span class="t" style="left:342.5px;top:73.5px;font-size:16px;color:#1f1f1f;letter-spacing:0.314px;transform:scaleX(1.0900);-webkit-text-stroke:0.3px #1f1f1f;">Intruder</span>
<span class="t" style="left:453.5px;top:73.5px;font-size:16px;color:#1f1f1f;transform:scaleX(1.0482);-webkit-text-stroke:0.3px #1f1f1f;">Repeater</span>
<span class="t" style="left:570.5px;top:73.5px;font-size:16px;color:#1f1f1f;letter-spacing:0.167px;transform:scaleX(1.0900);-webkit-text-stroke:0.3px #1f1f1f;">Collaborator</span>
<span class="t" style="left:716px;top:73.5px;font-size:16px;color:#1f1f1f;transform:scaleX(1.0466);-webkit-text-stroke:0.3px #1f1f1f;">Sequencer</span>
<span class="t" style="left:845px;top:73.5px;font-size:16px;color:#1f1f1f;transform:scaleX(1.0581);-webkit-text-stroke:0.3px #1f1f1f;">Decoder</span>
<span class="t" style="left:957px;top:73.5px;font-size:16px;color:#1f1f1f;transform:scaleX(1.0613);-webkit-text-stroke:0.3px #1f1f1f;">Comparer</span>
<span class="t" style="left:1080px;top:73.5px;font-size:16px;color:#1f1f1f;transform:scaleX(1.0837);-webkit-text-stroke:0.3px #1f1f1f;">Logger</span>
<span class="t" style="left:1182.5px;top:73.5px;font-size:16px;color:#1f1f1f;transform:scaleX(1.0819);-webkit-text-stroke:0.3px #1f1f1f;">Organizer</span>
<span class="t" style="left:1306.5px;top:73.5px;font-size:16px;color:#1f1f1f;transform:scaleX(1.0477);-webkit-text-stroke:0.3px #1f1f1f;">Extensions</span>
<span class="t" style="left:1437.5px;top:73.5px;font-size:16px;color:#1f1f1f;-webkit-text-stroke:0.3px #1f1f1f;">Learn</span>
<span class="t" style="left:1526.5px;top:73.5px;font-size:16px;color:#1f1f1f;transform:scaleX(1.0876);-webkit-text-stroke:0.3px #1f1f1f;">xssValidator</span>
<span class="t" style="left:1746.5px;top:74.5px;font-size:16px;color:#1f1f1f;transform:scaleX(0.9861);-webkit-text-stroke:0.3px #1f1f1f;">Search</span>
<span class="t" style="left:1842.5px;top:74.5px;font-size:16px;color:#1f1f1f;transform:scaleX(1.0638);-webkit-text-stroke:0.3px #1f1f1f;">Settings</span>
<span class="t" style="left:23px;top:113.5px;font-size:16px;color:#1f1f1f;letter-spacing:-1.459px;transform:scaleX(0.9400);-webkit-text-stroke:0.3px #1f1f1f;">1</span>
<span class="t" style="left:40.5px;top:168.0px;font-size:16px;color:#fff;font-weight:700;transform:scaleX(0.9776);">Send</span>
<span class="t" style="left:182.5px;top:168.0px;font-size:16px;color:#8a8a8a;transform:scaleX(1.0038);-webkit-text-stroke:0.15px #8a8a8a;">Cancel</span>
<span class="t" style="left:1511.5px;top:166.0px;font-size:16.5px;color:#111;font-weight:700;transform:scaleX(1.0031);">Target: https://uat4.csb.co.in</span>
<span class="t" style="left:1813.5px;top:167.0px;font-size:16px;color:#1f1f1f;transform:scaleX(0.9524);-webkit-text-stroke:0.3px #1f1f1f;">HTTP/1</span>
<span class="t" style="left:15px;top:243.5px;font-size:19.5px;color:#000;font-weight:700;transform:scaleX(0.9618);">Request</span>
<span class="t" style="left:23px;top:282.0px;font-size:16px;color:#9a9a9a;transform:scaleX(1.0288);-webkit-text-stroke:0.15px #9a9a9a;">Pretty</span>
<span class="t" style="left:111px;top:282.0px;font-size:16px;color:#1f1f1f;transform:scaleX(1.0307);-webkit-text-stroke:0.3px #1f1f1f;">Raw</span>
<span class="t" style="left:189px;top:282.0px;font-size:16px;color:#333;transform:scaleX(1.0192);-webkit-text-stroke:0.2px #333;">Hex</span>
<span class="t" style="left:667px;top:279.0px;font-size:16px;color:#1f1f1f;transform:scaleX(1.0867);-webkit-text-stroke:0.3px #1f1f1f;">\n</span>
<span class="t" style="left:765.3px;top:243.5px;font-size:19.5px;color:#000;font-weight:700;letter-spacing:-0.138px;transform:scaleX(0.9400);">Response</span>
<span class="t" style="left:773px;top:282.0px;font-size:16px;color:#1f1f1f;transform:scaleX(1.0288);-webkit-text-stroke:0.3px #1f1f1f;">Pretty</span>
<span class="t" style="left:861.8px;top:282.0px;font-size:16px;color:#333;transform:scaleX(0.9933);-webkit-text-stroke:0.2px #333;">Raw</span>
<span class="t" style="left:939.6px;top:282.0px;font-size:16px;color:#333;-webkit-text-stroke:0.2px #333;">Hex</span>
<span class="t" style="left:1013.2px;top:282.0px;font-size:16px;color:#333;transform:scaleX(1.0479);-webkit-text-stroke:0.2px #333;">Render</span>
<span class="t" style="left:1417px;top:279.0px;font-size:16px;color:#1f1f1f;transform:scaleX(1.0867);-webkit-text-stroke:0.3px #1f1f1f;">\n</span>
<span class="t" style="left:182px;top:1026.0px;font-size:16px;color:#9a9a9a;transform:scaleX(0.9861);-webkit-text-stroke:0.15px #9a9a9a;">Search</span>
<span class="t" style="left:631px;top:1026.0px;font-size:16px;color:#1f1f1f;letter-spacing:0.376px;transform:scaleX(1.0900);-webkit-text-stroke:0.3px #1f1f1f;">0 highlights</span>
<span class="t" style="left:932px;top:1026.0px;font-size:16px;color:#9a9a9a;transform:scaleX(0.9861);-webkit-text-stroke:0.15px #9a9a9a;">Search</span>
<span class="t" style="left:1381px;top:1026.0px;font-size:16px;color:#1f1f1f;letter-spacing:0.376px;transform:scaleX(1.0900);-webkit-text-stroke:0.3px #1f1f1f;">0 highlights</span>
<span class="t" style="left:8px;top:1072.5px;font-size:16px;color:#1f1f1f;transform:scaleX(1.0719);-webkit-text-stroke:0.3px #1f1f1f;">Done</span>
<span class="t" style="left:1720.3px;top:1072.5px;font-size:16px;color:#1f1f1f;transform:scaleX(1.0352);-webkit-text-stroke:0.3px #1f1f1f;">8,557 bytes | 22,379 millis</span>
<span class="t" style="left:23px;top:1111.8px;font-size:16px;color:#1f1f1f;transform:scaleX(1.0334);-webkit-text-stroke:0.3px #1f1f1f;">Event log (2)</span>
<span class="t" style="left:162px;top:1111.8px;font-size:16px;color:#1f1f1f;transform:scaleX(1.0101);-webkit-text-stroke:0.3px #1f1f1f;">All issues (5)</span>
<span class="t" style="left:1628px;top:1113.0px;font-size:16px;color:#1f1f1f;transform:scaleX(1.0328);-webkit-text-stroke:0.3px #1f1f1f;">Memory: 159.3MB</span>
<span class="t" style="left:1511.4px;top:228.0px;font-size:19px;color:#000;font-weight:700;transform:scaleX(0.9891);">Inspector</span>
<span class="t" style="left:1510.4px;top:286.0px;font-size:16px;color:#1f1f1f;letter-spacing:0.024px;transform:scaleX(1.0900);-webkit-text-stroke:0.3px #1f1f1f;">Request attributes</span>
<span class="t" style="left:1777px;top:286.0px;font-size:16px;color:#333;transform:scaleX(1.0105);-webkit-text-stroke:0.15px #333;">2</span>
<span class="t" style="left:1510.4px;top:343.0px;font-size:16px;color:#1f1f1f;transform:scaleX(1.0589);-webkit-text-stroke:0.3px #1f1f1f;">Request query parameters</span>
<span class="t" style="left:1777px;top:343.0px;font-size:16px;color:#333;transform:scaleX(1.0105);-webkit-text-stroke:0.15px #333;">0</span>
<span class="t" style="left:1510.4px;top:400.0px;font-size:16px;color:#1f1f1f;transform:scaleX(1.0657);-webkit-text-stroke:0.3px #1f1f1f;">Request body parameters</span>
<span class="t" style="left:1777px;top:400.0px;font-size:16px;color:#333;transform:scaleX(1.0105);-webkit-text-stroke:0.15px #333;">9</span>
<span class="t" style="left:1510.4px;top:457.0px;font-size:16px;color:#1f1f1f;transform:scaleX(1.0600);-webkit-text-stroke:0.3px #1f1f1f;">Request cookies</span>
<span class="t" style="left:1777px;top:457.0px;font-size:16px;color:#333;transform:scaleX(1.0105);-webkit-text-stroke:0.15px #333;">4</span>
<span class="t" style="left:1510.4px;top:514.0px;font-size:16px;color:#1f1f1f;transform:scaleX(1.0537);-webkit-text-stroke:0.3px #1f1f1f;">Request headers</span>
<span class="t" style="left:1768.6px;top:514.0px;font-size:16px;color:#333;letter-spacing:-0.137px;transform:scaleX(0.9400);-webkit-text-stroke:0.15px #333;">21</span>
<span class="t" style="left:1510.4px;top:571.0px;font-size:16px;color:#1f1f1f;transform:scaleX(1.0483);-webkit-text-stroke:0.3px #1f1f1f;">Response headers</span>
<span class="t" style="left:1768.6px;top:571.0px;font-size:16px;color:#333;-webkit-text-stroke:0.15px #333;">11</span>
<span class="t" style="left:132.5px;top:1161.0px;font-size:22px;color:#2b2b2b;transform:scaleX(1.0105);">Type here to search</span>
<span class="t" style="left:1672.5px;top:1158.6px;font-size:16.5px;color:#fff;letter-spacing:-0.276px;transform:scaleX(0.9400);">ENG</span>
<span class="t" style="left:1757.8px;top:1145.6px;font-size:17px;color:#fff;transform:scaleX(1.0150);">11:38</span>
<span class="t" style="left:1724.8px;top:1174.0px;font-size:17px;color:#fff;transform:scaleX(1.0741);">29-Aug-2024</span>
<span class="t" style="left:1876.8px;top:1170.6px;font-size:16px;color:#fff;font-weight:700;transform:scaleX(1.0554);">3</span>

</body>
</html>
